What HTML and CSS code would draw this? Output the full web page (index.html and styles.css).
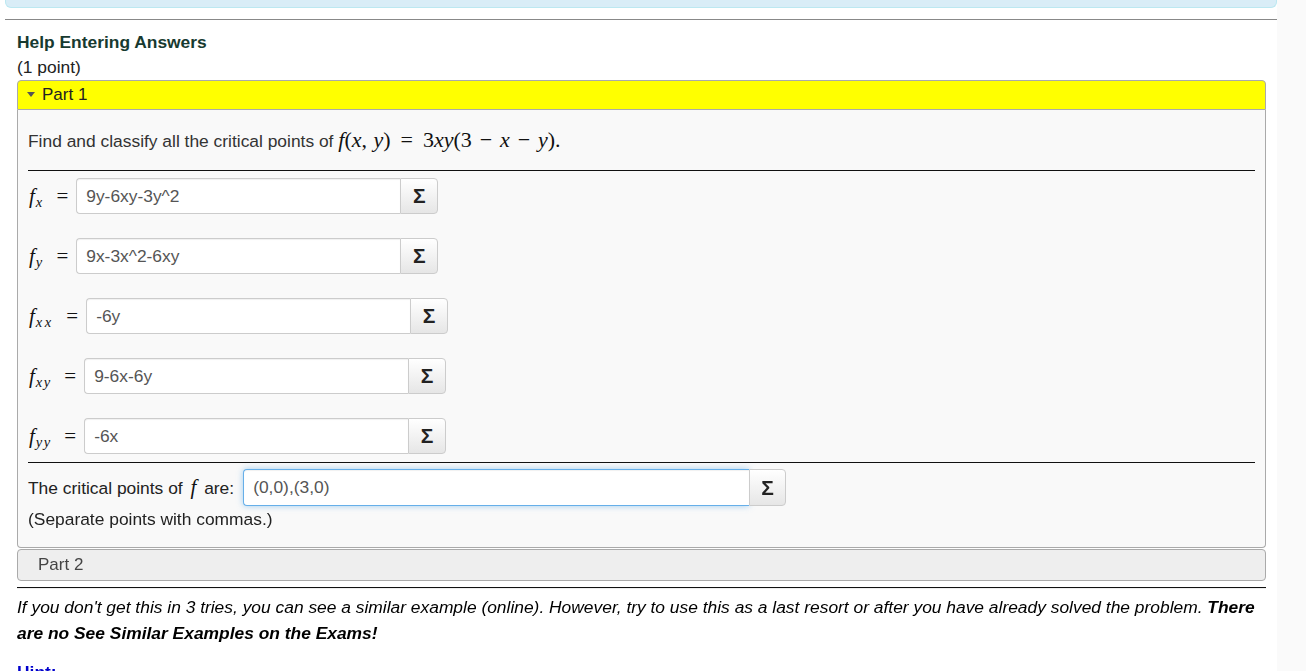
FILE: index.html
```html
<!DOCTYPE html>
<html lang="en">
<head>
  <meta charset="UTF-8" />
  <title>Help Entering Answers</title>
  <link rel="stylesheet" href="styles.css">
</head>
<body>
  <div class="page">
    <div class="alert-top"></div>
    <hr class="top-rule">

    <div class="problem">
      <h3 class="problem-title">Help Entering Answers</h3>
      <div class="points">(1 point)</div>

      <div class="part">
        <div class="part-head open"><span class="caret"></span>Part 1</div>
        <div class="part-body">
          <p class="statement">Find and classify all the critical points of
            <span class="math big"><i>f</i>(<i>x</i>,<span class="thin"></span><i>y</i>)<span class="rel">=</span>3<i>xy</i>(3<span class="bin">−</span><i>x</i><span class="bin">−</span><i>y</i>).</span>
          </p>
          <hr class="rule">

          <div class="answer-row">
            <span class="math label"><i>f</i><sub><i>x</i></sub><span class="rel">=</span></span>
            <div class="answer-group">
              <input class="answer" type="text" value="9y-6xy-3y^2">
              <button class="sigma">Σ</button>
            </div>
          </div>
          <div class="answer-row">
            <span class="math label"><i>f</i><sub><i>y</i></sub><span class="rel">=</span></span>
            <div class="answer-group">
              <input class="answer" type="text" value="9x-3x^2-6xy">
              <button class="sigma">Σ</button>
            </div>
          </div>
          <div class="answer-row">
            <span class="math label"><i>f</i><sub class="wide-sub"><i>xx</i></sub><span class="rel">=</span></span>
            <div class="answer-group">
              <input class="answer" type="text" value="-6y">
              <button class="sigma">Σ</button>
            </div>
          </div>
          <div class="answer-row">
            <span class="math label"><i>f</i><sub><i>xy</i></sub><span class="rel">=</span></span>
            <div class="answer-group">
              <input class="answer" type="text" value="9-6x-6y">
              <button class="sigma">Σ</button>
            </div>
          </div>
          <div class="answer-row">
            <span class="math label"><i>f</i><sub><i>yy</i></sub><span class="rel">=</span></span>
            <div class="answer-group">
              <input class="answer" type="text" value="-6x">
              <button class="sigma">Σ</button>
            </div>
          </div>

          <hr class="rule">

          <div class="answer-row wide">
            <span class="label-text">The critical points of <span class="math f-only"><i>f</i></span> are:</span>
            <div class="answer-group long">
              <input class="answer focused" type="text" value="(0,0),(3,0)" autofocus>
              <button class="sigma">Σ</button>
            </div>
          </div>
          <div class="hint-text">(Separate points with commas.)</div>
        </div>
      </div>

      <div class="part">
        <div class="part-head closed">Part 2</div>
      </div>

      <hr class="rule section">

      <p class="note">If you don't get this in 3 tries, you can see a similar example (online). However, try to use this as a last resort or after you have already solved the problem. <b>There are no See Similar Examples on the Exams!</b></p>

      <a class="hint-link" href="#">Hint:</a>
    </div>
  </div>
</body>
</html>
```

FILE: styles.css
```css
body {
  margin: 0;
  background-color: #fafafa;
  font-family: "Liberation Sans", Arial, sans-serif;
  font-size: 17.4px;
  color: #333;
}

.page {
  width: 1272px;
  padding-left: 5px;
  height: 671px;
  overflow: hidden;
  background-color: white;
}

.alert-top {
  height: 7px;
  background-color: #d9edf7;
  border: 1px solid #bce8f1;
  border-top: none;
  border-radius: 0 0 6px 6px;
}

.top-rule {
  margin: 11px 0 0;
  border: none;
  border-top: 1px solid #888;
}

.problem {
  padding: 0 11px 0 12px;
}

.problem-title {
  margin: 11px 0 0;
  font-size: 17.4px;
  line-height: 22px;
  font-weight: bold;
  color: #173a30;
}

.points {
  margin-top: 3px;
  line-height: 22px;
  color: #222;
}

/* parts */
.part-head {
  margin-top: 2px;
  height: 28px;
  line-height: 28px;
  border: 1px solid #aaa;
  color: #222;
  padding-left: 9px;
  font-size: 17px;
}

.part-head.open {
  background-color: #ffff00;
  border-radius: 4px 4px 0 0;
}

.part-head.closed {
  margin-top: 1px;
  height: 30px;
  line-height: 30px;
  background-color: #eeeeee;
  border-radius: 4px;
  padding-left: 20px;
  color: #444;
}

.caret {
  display: inline-block;
  width: 0;
  height: 0;
  border-left: 4px solid transparent;
  border-right: 4px solid transparent;
  border-top: 5px solid #555;
  margin-right: 7px;
  vertical-align: 3px;
}

.part-body {
  background-color: #f9f9f9;
  border: 1px solid #aaa;
  border-top: none;
  border-radius: 0 0 4px 4px;
  padding: 18px 10px 17px;
}

.statement {
  margin: 0 0 17px;
  line-height: 24px;
}

.math {
  font-family: "Liberation Serif", "Times New Roman", serif;
  font-size: 21px;
  color: #111;
}

.math.big {
  font-size: 22px;
}

.math i {
  font-style: italic;
}

.math sub {
  font-size: 14.5px;
  vertical-align: -4px;
  line-height: 0;
  margin-left: 1px;
  letter-spacing: 1.5px;
}

.math sub.wide-sub {
  letter-spacing: 2.5px;
}

.rel {
  margin: 0 0.45em;
}

.bin {
  margin: 0 0.36em;
}

.thin {
  margin-left: 0.3em;
}

.f-only {
  margin: 0 3px;
}

.rule {
  margin: 0;
  border: none;
  border-top: 1px solid #111;
}

.rule.section {
  margin-top: 6px;
  border-top: 1px solid #111;
  border-bottom: 1px solid #eee;
}

/* answers */
.answer-row {
  display: flex;
  align-items: center;
  gap: 8px;
  margin-top: 7px;
  height: 36px;
}

.answer-row + .answer-row {
  margin-top: 24px;
}

.rule + .answer-row {
  margin-top: 7px;
}

.answer-row.wide {
  height: 37px;
  gap: 9px;
}

.rule + .answer-row.wide {
  margin-top: 6px;
}

.answer-row + .rule {
  margin-top: 8px;
}

.label {
  padding-left: 1px;
  white-space: nowrap;
}

.label .rel {
  margin: 0 0 0 0.6em;
}

.label-text {
  color: #222;
}

.answer-group {
  display: flex;
  height: 100%;
}

.answer {
  box-sizing: border-box;
  width: 324px;
  height: 100%;
  padding: 0 9px;
  border: 1px solid #ccc;
  border-right: none;
  border-radius: 4px 0 0 4px;
  background-color: white;
  font-family: "Liberation Sans", Arial, sans-serif;
  font-size: 17.4px;
  color: #555;
  box-shadow: inset 0 1px 1px rgba(0,0,0,0.06);
  outline: none;
}

.long .answer {
  width: 506px;
}

.answer.focused {
  border: 1px solid #66afe9;
  border-right: none;
  box-shadow: inset 0 1px 1px rgba(0,0,0,0.06), 0 0 6px rgba(102,175,233,0.6);
}

.sigma {
  width: 38px;
  height: 100%;
  border: 1px solid #ccc;
  border-radius: 0 4px 4px 0;
  background: linear-gradient(#ffffff, #e6e6e6);
  font-family: "Liberation Sans", Arial, sans-serif;
  font-size: 21px;
  font-weight: bold;
  color: #222;
  padding: 0;
}

.long .sigma {
  width: 37px;
}

.hint-text {
  margin-top: 2px;
  line-height: 22px;
  color: #222;
}

/* bottom note */
.note {
  margin: 5px 0 0;
  line-height: 26px;
  font-style: italic;
  color: #000;
}

.hint-link {
  display: inline-block;
  margin-top: 16px;
  color: #0000cc;
  font-weight: bold;
  text-decoration: none;
}
```
